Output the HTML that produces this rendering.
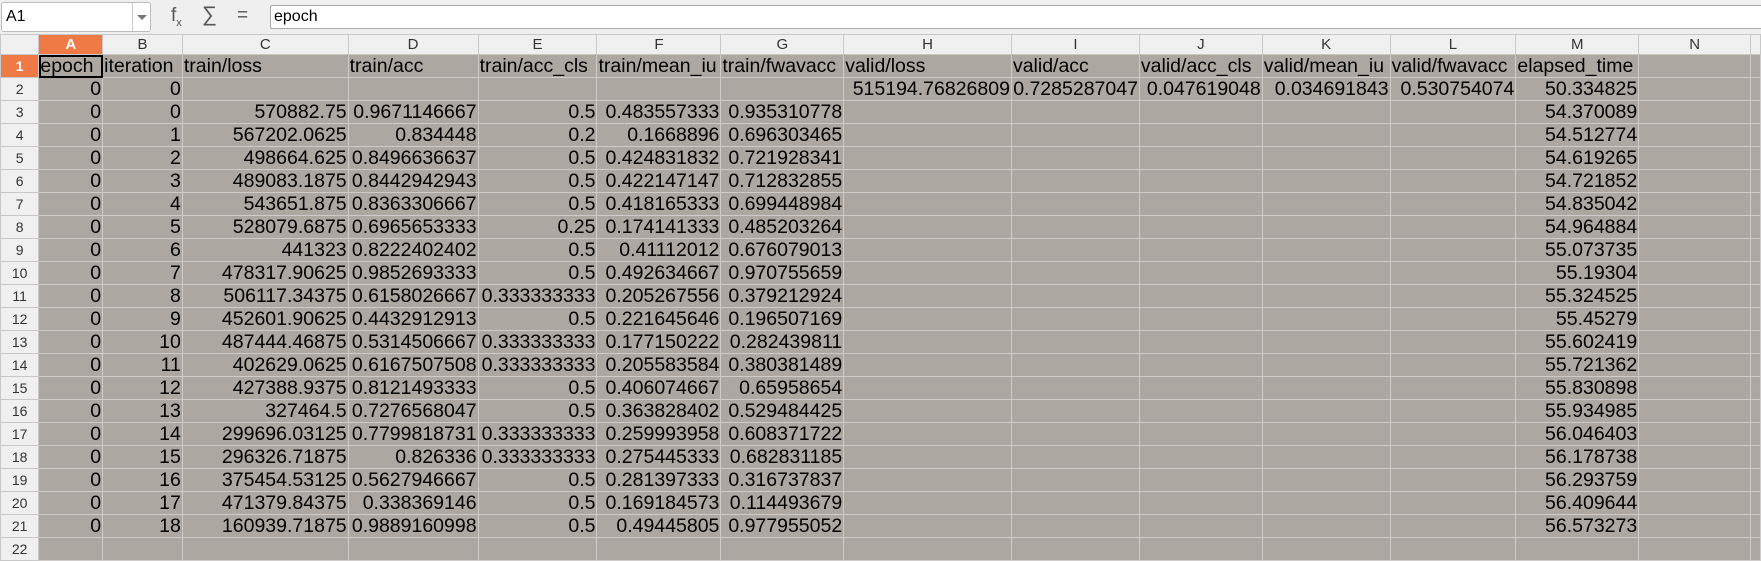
<!DOCTYPE html><html><head><style>
body{margin:0;width:1761px;height:542px;overflow:hidden;background:#fff;font-family:"Liberation Sans",sans-serif}
.tb{position:absolute;left:0;top:0;width:1761px;height:34px;background:#efefef;border-bottom:1px solid #555}
.nb{position:absolute;left:1px;top:2px;width:150px;height:30px;background:#fff;border:1px solid #bbb;border-radius:3px;font-size:16px;line-height:28px;box-sizing:border-box;padding-left:4px}
.nb .dd{position:absolute;right:0;top:0;width:17px;height:28px;border-left:1px solid #ccc;}
.nb .dd:after{content:"";position:absolute;left:4px;top:12px;border:5px solid transparent;border-top:5px solid #777}
.ic{position:absolute;top:5px;font-size:19px;color:#555}
.fb{position:absolute;left:270px;top:5px;width:1500px;height:22px;background:#fff;border:1px solid #aaa;border-radius:2px;font-size:16px;line-height:22px;padding-left:3px}
table{position:absolute;left:0;top:34px;border-collapse:collapse;table-layout:fixed;font-size:19.5px}
td{height:22px;line-height:22px;padding:0 1px;border:1px solid #cfcbc8;background:#ada7a1;text-align:right;white-space:nowrap;overflow:hidden;color:#000}
tr.h td{height:19px;line-height:19px;background:#f0f0f0;border-color:#c8c8c8;text-align:center;font-size:15px;color:#333}
td.r{background:#f0f0f0;border-color:#c8c8c8;text-align:center;font-size:14px;color:#333}
td.t{text-align:left}
</style></head><body>
<div class="tb"><div class="nb">A1<div class="dd"></div></div>
<span class="ic" style="left:171px">f<sub style="font-size:11px">x</sub></span>
<span class="ic" style="left:202px;font-size:21px;top:3px">∑</span>
<span class="ic" style="left:237px">=</span>
<div class="fb">epoch</div></div>
<table>
<colgroup><col style="width:39px"><col style="width:64px"><col style="width:80px"><col style="width:167px"><col style="width:130px"><col style="width:119px"><col style="width:124px"><col style="width:123px"><col style="width:168px"><col style="width:128px"><col style="width:123px"><col style="width:128px"><col style="width:126px"><col style="width:123px"><col style="width:115px"><col style="width:10px"></colgroup>
<tr class="h"><td style="background:#f0f0f0"></td><td style="background:#f07a45;color:#fff;font-weight:bold">A</td><td>B</td><td>C</td><td>D</td><td>E</td><td>F</td><td>G</td><td>H</td><td>I</td><td>J</td><td>K</td><td>L</td><td>M</td><td>N</td><td></td></tr>
<tr><td class="r" style="background:#f07a45;color:#fff;font-weight:bold">1</td><td class="t" style="outline:2px solid #000;outline-offset:-2px">epoch</td><td class="t">iteration</td><td class="t">train/loss</td><td class="t">train/acc</td><td class="t">train/acc_cls</td><td class="t">train/mean_iu</td><td class="t">train/fwavacc</td><td class="t">valid/loss</td><td class="t">valid/acc</td><td class="t">valid/acc_cls</td><td class="t">valid/mean_iu</td><td class="t">valid/fwavacc</td><td class="t">elapsed_time</td><td></td><td></td></tr>
<tr><td class="r">2</td><td>0</td><td>0</td><td></td><td></td><td></td><td></td><td></td><td>515194.76826809</td><td>0.7285287047</td><td>0.047619048</td><td>0.034691843</td><td>0.530754074</td><td>50.334825</td><td></td><td></td></tr>
<tr><td class="r">3</td><td>0</td><td>0</td><td>570882.75</td><td>0.9671146667</td><td>0.5</td><td>0.483557333</td><td>0.935310778</td><td></td><td></td><td></td><td></td><td></td><td>54.370089</td><td></td><td></td></tr>
<tr><td class="r">4</td><td>0</td><td>1</td><td>567202.0625</td><td>0.834448</td><td>0.2</td><td>0.1668896</td><td>0.696303465</td><td></td><td></td><td></td><td></td><td></td><td>54.512774</td><td></td><td></td></tr>
<tr><td class="r">5</td><td>0</td><td>2</td><td>498664.625</td><td>0.8496636637</td><td>0.5</td><td>0.424831832</td><td>0.721928341</td><td></td><td></td><td></td><td></td><td></td><td>54.619265</td><td></td><td></td></tr>
<tr><td class="r">6</td><td>0</td><td>3</td><td>489083.1875</td><td>0.8442942943</td><td>0.5</td><td>0.422147147</td><td>0.712832855</td><td></td><td></td><td></td><td></td><td></td><td>54.721852</td><td></td><td></td></tr>
<tr><td class="r">7</td><td>0</td><td>4</td><td>543651.875</td><td>0.8363306667</td><td>0.5</td><td>0.418165333</td><td>0.699448984</td><td></td><td></td><td></td><td></td><td></td><td>54.835042</td><td></td><td></td></tr>
<tr><td class="r">8</td><td>0</td><td>5</td><td>528079.6875</td><td>0.6965653333</td><td>0.25</td><td>0.174141333</td><td>0.485203264</td><td></td><td></td><td></td><td></td><td></td><td>54.964884</td><td></td><td></td></tr>
<tr><td class="r">9</td><td>0</td><td>6</td><td>441323</td><td>0.8222402402</td><td>0.5</td><td>0.41112012</td><td>0.676079013</td><td></td><td></td><td></td><td></td><td></td><td>55.073735</td><td></td><td></td></tr>
<tr><td class="r">10</td><td>0</td><td>7</td><td>478317.90625</td><td>0.9852693333</td><td>0.5</td><td>0.492634667</td><td>0.970755659</td><td></td><td></td><td></td><td></td><td></td><td>55.19304</td><td></td><td></td></tr>
<tr><td class="r">11</td><td>0</td><td>8</td><td>506117.34375</td><td>0.6158026667</td><td>0.333333333</td><td>0.205267556</td><td>0.379212924</td><td></td><td></td><td></td><td></td><td></td><td>55.324525</td><td></td><td></td></tr>
<tr><td class="r">12</td><td>0</td><td>9</td><td>452601.90625</td><td>0.4432912913</td><td>0.5</td><td>0.221645646</td><td>0.196507169</td><td></td><td></td><td></td><td></td><td></td><td>55.45279</td><td></td><td></td></tr>
<tr><td class="r">13</td><td>0</td><td>10</td><td>487444.46875</td><td>0.5314506667</td><td>0.333333333</td><td>0.177150222</td><td>0.282439811</td><td></td><td></td><td></td><td></td><td></td><td>55.602419</td><td></td><td></td></tr>
<tr><td class="r">14</td><td>0</td><td>11</td><td>402629.0625</td><td>0.6167507508</td><td>0.333333333</td><td>0.205583584</td><td>0.380381489</td><td></td><td></td><td></td><td></td><td></td><td>55.721362</td><td></td><td></td></tr>
<tr><td class="r">15</td><td>0</td><td>12</td><td>427388.9375</td><td>0.8121493333</td><td>0.5</td><td>0.406074667</td><td>0.65958654</td><td></td><td></td><td></td><td></td><td></td><td>55.830898</td><td></td><td></td></tr>
<tr><td class="r">16</td><td>0</td><td>13</td><td>327464.5</td><td>0.7276568047</td><td>0.5</td><td>0.363828402</td><td>0.529484425</td><td></td><td></td><td></td><td></td><td></td><td>55.934985</td><td></td><td></td></tr>
<tr><td class="r">17</td><td>0</td><td>14</td><td>299696.03125</td><td>0.7799818731</td><td>0.333333333</td><td>0.259993958</td><td>0.608371722</td><td></td><td></td><td></td><td></td><td></td><td>56.046403</td><td></td><td></td></tr>
<tr><td class="r">18</td><td>0</td><td>15</td><td>296326.71875</td><td>0.826336</td><td>0.333333333</td><td>0.275445333</td><td>0.682831185</td><td></td><td></td><td></td><td></td><td></td><td>56.178738</td><td></td><td></td></tr>
<tr><td class="r">19</td><td>0</td><td>16</td><td>375454.53125</td><td>0.5627946667</td><td>0.5</td><td>0.281397333</td><td>0.316737837</td><td></td><td></td><td></td><td></td><td></td><td>56.293759</td><td></td><td></td></tr>
<tr><td class="r">20</td><td>0</td><td>17</td><td>471379.84375</td><td>0.338369146</td><td>0.5</td><td>0.169184573</td><td>0.114493679</td><td></td><td></td><td></td><td></td><td></td><td>56.409644</td><td></td><td></td></tr>
<tr><td class="r">21</td><td>0</td><td>18</td><td>160939.71875</td><td>0.9889160998</td><td>0.5</td><td>0.49445805</td><td>0.977955052</td><td></td><td></td><td></td><td></td><td></td><td>56.573273</td><td></td><td></td></tr>
<tr><td class="r">22</td><td></td><td></td><td></td><td></td><td></td><td></td><td></td><td></td><td></td><td></td><td></td><td></td><td></td><td></td><td></td></tr>
</table>
</body></html>
